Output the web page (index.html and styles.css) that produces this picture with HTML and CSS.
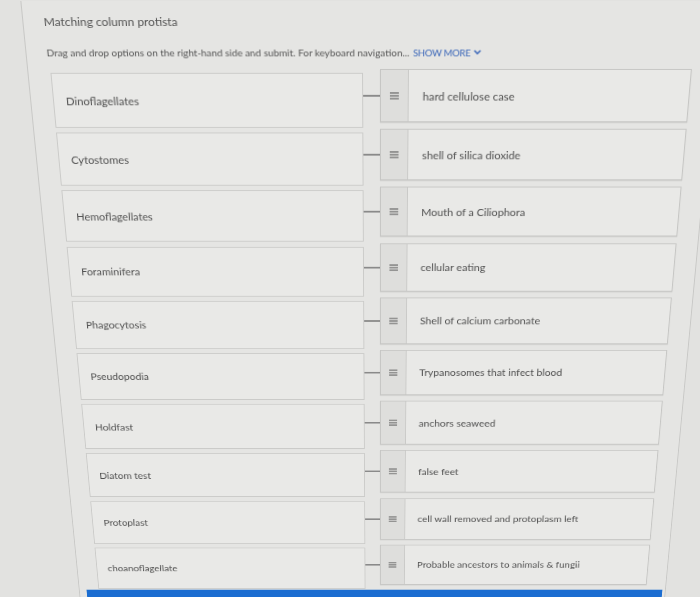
FILE: index.html
```html
<!DOCTYPE html>
<html>
<head>
<meta charset="utf-8">
<title>Matching column protista</title>
<link rel="stylesheet" href="styles.css">
</head>
<body>
<div class="stage">
  <div class="panel">
    <h1 class="title">Matching column protista</h1>
    <p class="hint">Drag and drop options on the right-hand side and submit. For keyboard navigation... <span class="more">SHOW MORE <svg class="chev" width="8" height="6" viewBox="0 0 8 6"><path d="M1 1 L4 4.2 L7 1" fill="none" stroke="#3a66b8" stroke-width="1.6"/></svg></span></p>
    <div class="list">
      <div class="row"><div class="prompt">Dinoflagellates</div><div class="link"></div><div class="answer"><div class="grip"><svg width="9" height="8" viewBox="0 0 9 8"><path d="M0 1h9M0 4h9M0 7h9" stroke="#4a4a4a" stroke-width="1.2"/></svg></div><div class="answer-text">hard cellulose case</div></div></div>
      <div class="row"><div class="prompt">Cytostomes</div><div class="link"></div><div class="answer"><div class="grip"><svg width="9" height="8" viewBox="0 0 9 8"><path d="M0 1h9M0 4h9M0 7h9" stroke="#4a4a4a" stroke-width="1.2"/></svg></div><div class="answer-text">shell of silica dioxide</div></div></div>
      <div class="row"><div class="prompt">Hemoflagellates</div><div class="link"></div><div class="answer"><div class="grip"><svg width="9" height="8" viewBox="0 0 9 8"><path d="M0 1h9M0 4h9M0 7h9" stroke="#4a4a4a" stroke-width="1.2"/></svg></div><div class="answer-text">Mouth of a Ciliophora</div></div></div>
      <div class="row"><div class="prompt">Foraminifera</div><div class="link"></div><div class="answer"><div class="grip"><svg width="9" height="8" viewBox="0 0 9 8"><path d="M0 1h9M0 4h9M0 7h9" stroke="#4a4a4a" stroke-width="1.2"/></svg></div><div class="answer-text">cellular eating</div></div></div>
      <div class="row"><div class="prompt">Phagocytosis</div><div class="link"></div><div class="answer"><div class="grip"><svg width="9" height="8" viewBox="0 0 9 8"><path d="M0 1h9M0 4h9M0 7h9" stroke="#4a4a4a" stroke-width="1.2"/></svg></div><div class="answer-text">Shell of calcium carbonate</div></div></div>
      <div class="row"><div class="prompt">Pseudopodia</div><div class="link"></div><div class="answer"><div class="grip"><svg width="9" height="8" viewBox="0 0 9 8"><path d="M0 1h9M0 4h9M0 7h9" stroke="#4a4a4a" stroke-width="1.2"/></svg></div><div class="answer-text">Trypanosomes that infect blood</div></div></div>
      <div class="row"><div class="prompt">Holdfast</div><div class="link"></div><div class="answer"><div class="grip"><svg width="9" height="8" viewBox="0 0 9 8"><path d="M0 1h9M0 4h9M0 7h9" stroke="#4a4a4a" stroke-width="1.2"/></svg></div><div class="answer-text">anchors seaweed</div></div></div>
      <div class="row"><div class="prompt">Diatom test</div><div class="link"></div><div class="answer"><div class="grip"><svg width="9" height="8" viewBox="0 0 9 8"><path d="M0 1h9M0 4h9M0 7h9" stroke="#4a4a4a" stroke-width="1.2"/></svg></div><div class="answer-text">false feet</div></div></div>
      <div class="row"><div class="prompt">Protoplast</div><div class="link"></div><div class="answer"><div class="grip"><svg width="9" height="8" viewBox="0 0 9 8"><path d="M0 1h9M0 4h9M0 7h9" stroke="#4a4a4a" stroke-width="1.2"/></svg></div><div class="answer-text">cell wall removed and protoplasm left</div></div></div>
      <div class="row"><div class="prompt">choanoflagellate</div><div class="link"></div><div class="answer"><div class="grip"><svg width="9" height="8" viewBox="0 0 9 8"><path d="M0 1h9M0 4h9M0 7h9" stroke="#4a4a4a" stroke-width="1.2"/></svg></div><div class="answer-text">Probable ancestors to animals &amp; fungii</div></div></div>
    </div>
    <div class="submit-bar"></div>
  </div>
</div>
</body>
</html>
```

FILE: styles.css
```css
html, body {
  margin: 0;
  padding: 0;
  overflow: hidden;
  background: #e2e2e0;
}

body {
  font-family: Lato, "Liberation Sans", sans-serif;
  color: #555;
  width: 700px;
  height: 597px;
}

.stage {
  width: 740px;
  transform-origin: 380px 68px;
  transform: perspective(952px) rotateX(-15deg);
}

.panel {
  margin-left: 27px;
  width: 688px;
  box-sizing: border-box;
  border-left: 1px solid #c8c8c6;
  border-right: 1px solid #c8c8c6;
  padding: 13px 0 40px 20px;
  background: #e5e5e3;
}

.title {
  margin: 0;
  font-size: 11.8px;
  line-height: 16px;
  font-weight: 400;
  color: #555;
}

.hint {
  margin: 15.5px 0 0 0;
  font-size: 9.9px;
  line-height: 14px;
  color: #555;
  white-space: nowrap;
}

.more {
  color: #3a66b8;
  margin-left: 1px;
  font-size: 9.4px;
  letter-spacing: -0.2px;
}

.chev {
  margin-left: 1px;
  vertical-align: 1px;
}

.list {
  margin-top: 9.5px;
}

.row {
  display: flex;
  align-items: flex-start;
  height: 63.2px;
}

.prompt {
  margin-top: 4px;
  margin-left: 2px;
  width: 313px;
  height: 58px;
  box-sizing: border-box;
  border: 1px solid #cbcbc9;
  background: #e9e9e7;
  display: flex;
  align-items: center;
  padding-left: 12px;
  font-size: 11.3px;
  color: #505050;
}

.link {
  width: 17px;
  height: 2px;
  background: #8a8a8a;
  margin-top: 27px;
}

.answer {
  width: 312px;
  height: 56px;
  box-sizing: border-box;
  border: 1px solid #c6c6c4;
  background: #e9e9e7;
  display: flex;
  box-shadow: 0 1px 1px rgba(0, 0, 0, 0.08);
}

.grip {
  width: 27px;
  flex: none;
  background: #dededc;
  border-right: 1px solid #cacac8;
  display: flex;
  align-items: center;
  justify-content: center;
}

.answer-text {
  display: flex;
  align-items: center;
  padding-left: 14px;
  font-size: 11.3px;
  color: #505050;
}

.submit-bar {
  margin: 0 3px 0 -12px;
  height: 24px;
  background: #1b6dd1;
}
```
